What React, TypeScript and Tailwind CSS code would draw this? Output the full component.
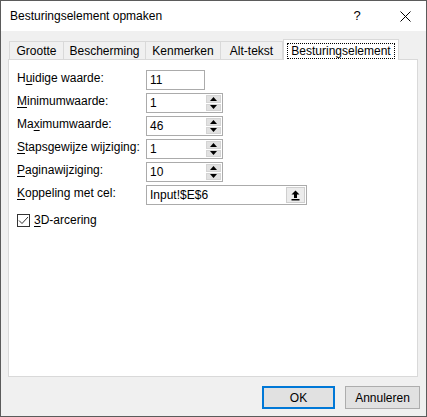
import React from "react";

const U = ({ children }: { children: React.ReactNode }) => <span className="underline underline-offset-2">{children}</span>;

function Spin() {
  return (
    <div className="flex flex-col h-full w-[16px] gap-px py-px pr-px">
      <div className="flex-1 bg-[#e1e1e1] border border-[#d4d4d4] flex items-center justify-center">
        <svg width="7" height="4" viewBox="0 0 7 4"><path d="M3.5 0 L7 4 L0 4 Z" fill="#000" /></svg>
      </div>
      <div className="flex-1 bg-[#e1e1e1] border border-[#d4d4d4] flex items-center justify-center">
        <svg width="7" height="4" viewBox="0 0 7 4"><path d="M0 0 L7 0 L3.5 4 Z" fill="#000" /></svg>
      </div>
    </div>
  );
}

function Box({ value, w, spin }: { value: string; w: string; spin?: boolean }) {
  return (
    <div className={`${w} h-[20px] border border-[#ababab] bg-white flex items-stretch`}>
      <div className="flex-1 pl-[3px] pt-[2px] leading-[15px]">{value}</div>
      {spin && <Spin />}
    </div>
  );
}

function Row({ label, children }: { label: React.ReactNode; children: React.ReactNode }) {
  return (
    <div className="flex h-[23px]">
      <div className="w-[129px] leading-[15px] pt-[1px]">{label}</div>
      {children}
    </div>
  );
}

export default function App() {
  const tabs = [
    { t: "Grootte", w: "w-[55px]" },
    { t: "Bescherming", w: "w-[83px]" },
    { t: "Kenmerken", w: "w-[76px]" },
    { t: "Alt-tekst", w: "w-[63px]" },
  ];
  return (
    <div className="w-[427px] h-[417px] bg-[#f0f0f0] border border-[#5b5b5b] flex flex-col text-[12px] text-black font-['Liberation_Sans',Arial,sans-serif] overflow-hidden">
      {/* title bar */}
      <div className="h-[30px] bg-white flex items-center shrink-0">
        <div className="pl-[9px] flex-1 leading-[15px]">Besturingselement opmaken</div>
        <div className="w-[14px] text-center text-[13px] mr-[36px]">?</div>
        <svg width="11" height="11" viewBox="0 0 11 11" className="mr-[15px]">
          <path d="M0.5 0.5 L10.5 10.5 M10.5 0.5 L0.5 10.5" stroke="#000" strokeWidth="1" />
        </svg>
      </div>
      {/* tabs */}
      <div className="flex items-end pl-[8px] pt-[7px] h-[28px] shrink-0">
        {tabs.map((tab) => (
          <div
            key={tab.t}
            className={`${tab.w} h-[18px] border border-b-0 border-[#d9d9d9] -ml-px first:ml-0 flex items-center justify-center leading-[15px] pt-[1px]`}
          >
            {tab.t}
          </div>
        ))}
        <div className="w-[116px] h-[21px] bg-white border border-b-0 border-[#d9d9d9] relative z-10 -mb-px flex items-start justify-center pt-[3px]">
          <div className="border border-dotted border-black px-[3px] leading-[14px]">Besturingselement</div>
        </div>
      </div>
      {/* panel */}
      <div className="ml-[7px] mr-[8px] h-[318px] bg-white border border-[#d9d9d9] shrink-0 pt-[10px] pl-[8px]">
        <Row label={<>H<U>u</U>idige waarde:</>}>
          <Box value="11" w="w-[59px]" />
        </Row>
        <Row label={<><U>M</U>inimumwaarde:</>}>
          <Box value="1" w="w-[77px]" spin />
        </Row>
        <Row label={<>Ma<U>x</U>imumwaarde:</>}>
          <Box value="46" w="w-[77px]" spin />
        </Row>
        <Row label={<><U>S</U>tapsgewijze wijziging:</>}>
          <Box value="1" w="w-[77px]" spin />
        </Row>
        <Row label={<><U>P</U>aginawijziging:</>}>
          <Box value="10" w="w-[77px]" spin />
        </Row>
        <Row label={<><U>K</U>oppeling met cel:</>}>
          <div className="w-[161px] h-[20px] border border-[#ababab] bg-white flex items-stretch">
            <div className="flex-1 pl-[3px] pt-[2px] leading-[15px]">Input!$E$6</div>
            <div className="w-[19px] border border-[#cfcfcf] bg-[#ececec] m-px ml-0 flex items-center justify-center">
              <svg width="9" height="11" viewBox="0 0 9 11">
                <path d="M4.5 0.5 L8.5 4.5 L6 4.5 L6 8 L3 8 L3 4.5 L0.5 4.5 Z" fill="#000" />
                <rect x="0.5" y="9" width="8" height="1.5" fill="#000" />
              </svg>
            </div>
          </div>
        </Row>
        <div className="flex items-center mt-[5px] gap-[4px]">
          <div className="w-[13px] h-[13px] border border-[#333] flex items-center justify-center">
            <svg width="11" height="9" viewBox="0 0 11 9">
              <path d="M1 4.5 L4 7.5 L10 1" stroke="#333" strokeWidth="1" fill="none" />
            </svg>
          </div>
          <div className="leading-[15px]"><U>3</U>D-arcering</div>
        </div>
      </div>
      {/* buttons */}
      <div className="flex justify-end pt-[9px] pr-[6px] gap-[10px]">
        <div className="w-[73px] h-[23px] bg-[#e1e1e1] border-2 border-[#0078d7] flex items-center justify-center">OK</div>
        <div className="w-[75px] h-[23px] bg-[#e1e1e1] border border-[#adadad] flex items-center justify-center">Annuleren</div>
      </div>
    </div>
  );
}
